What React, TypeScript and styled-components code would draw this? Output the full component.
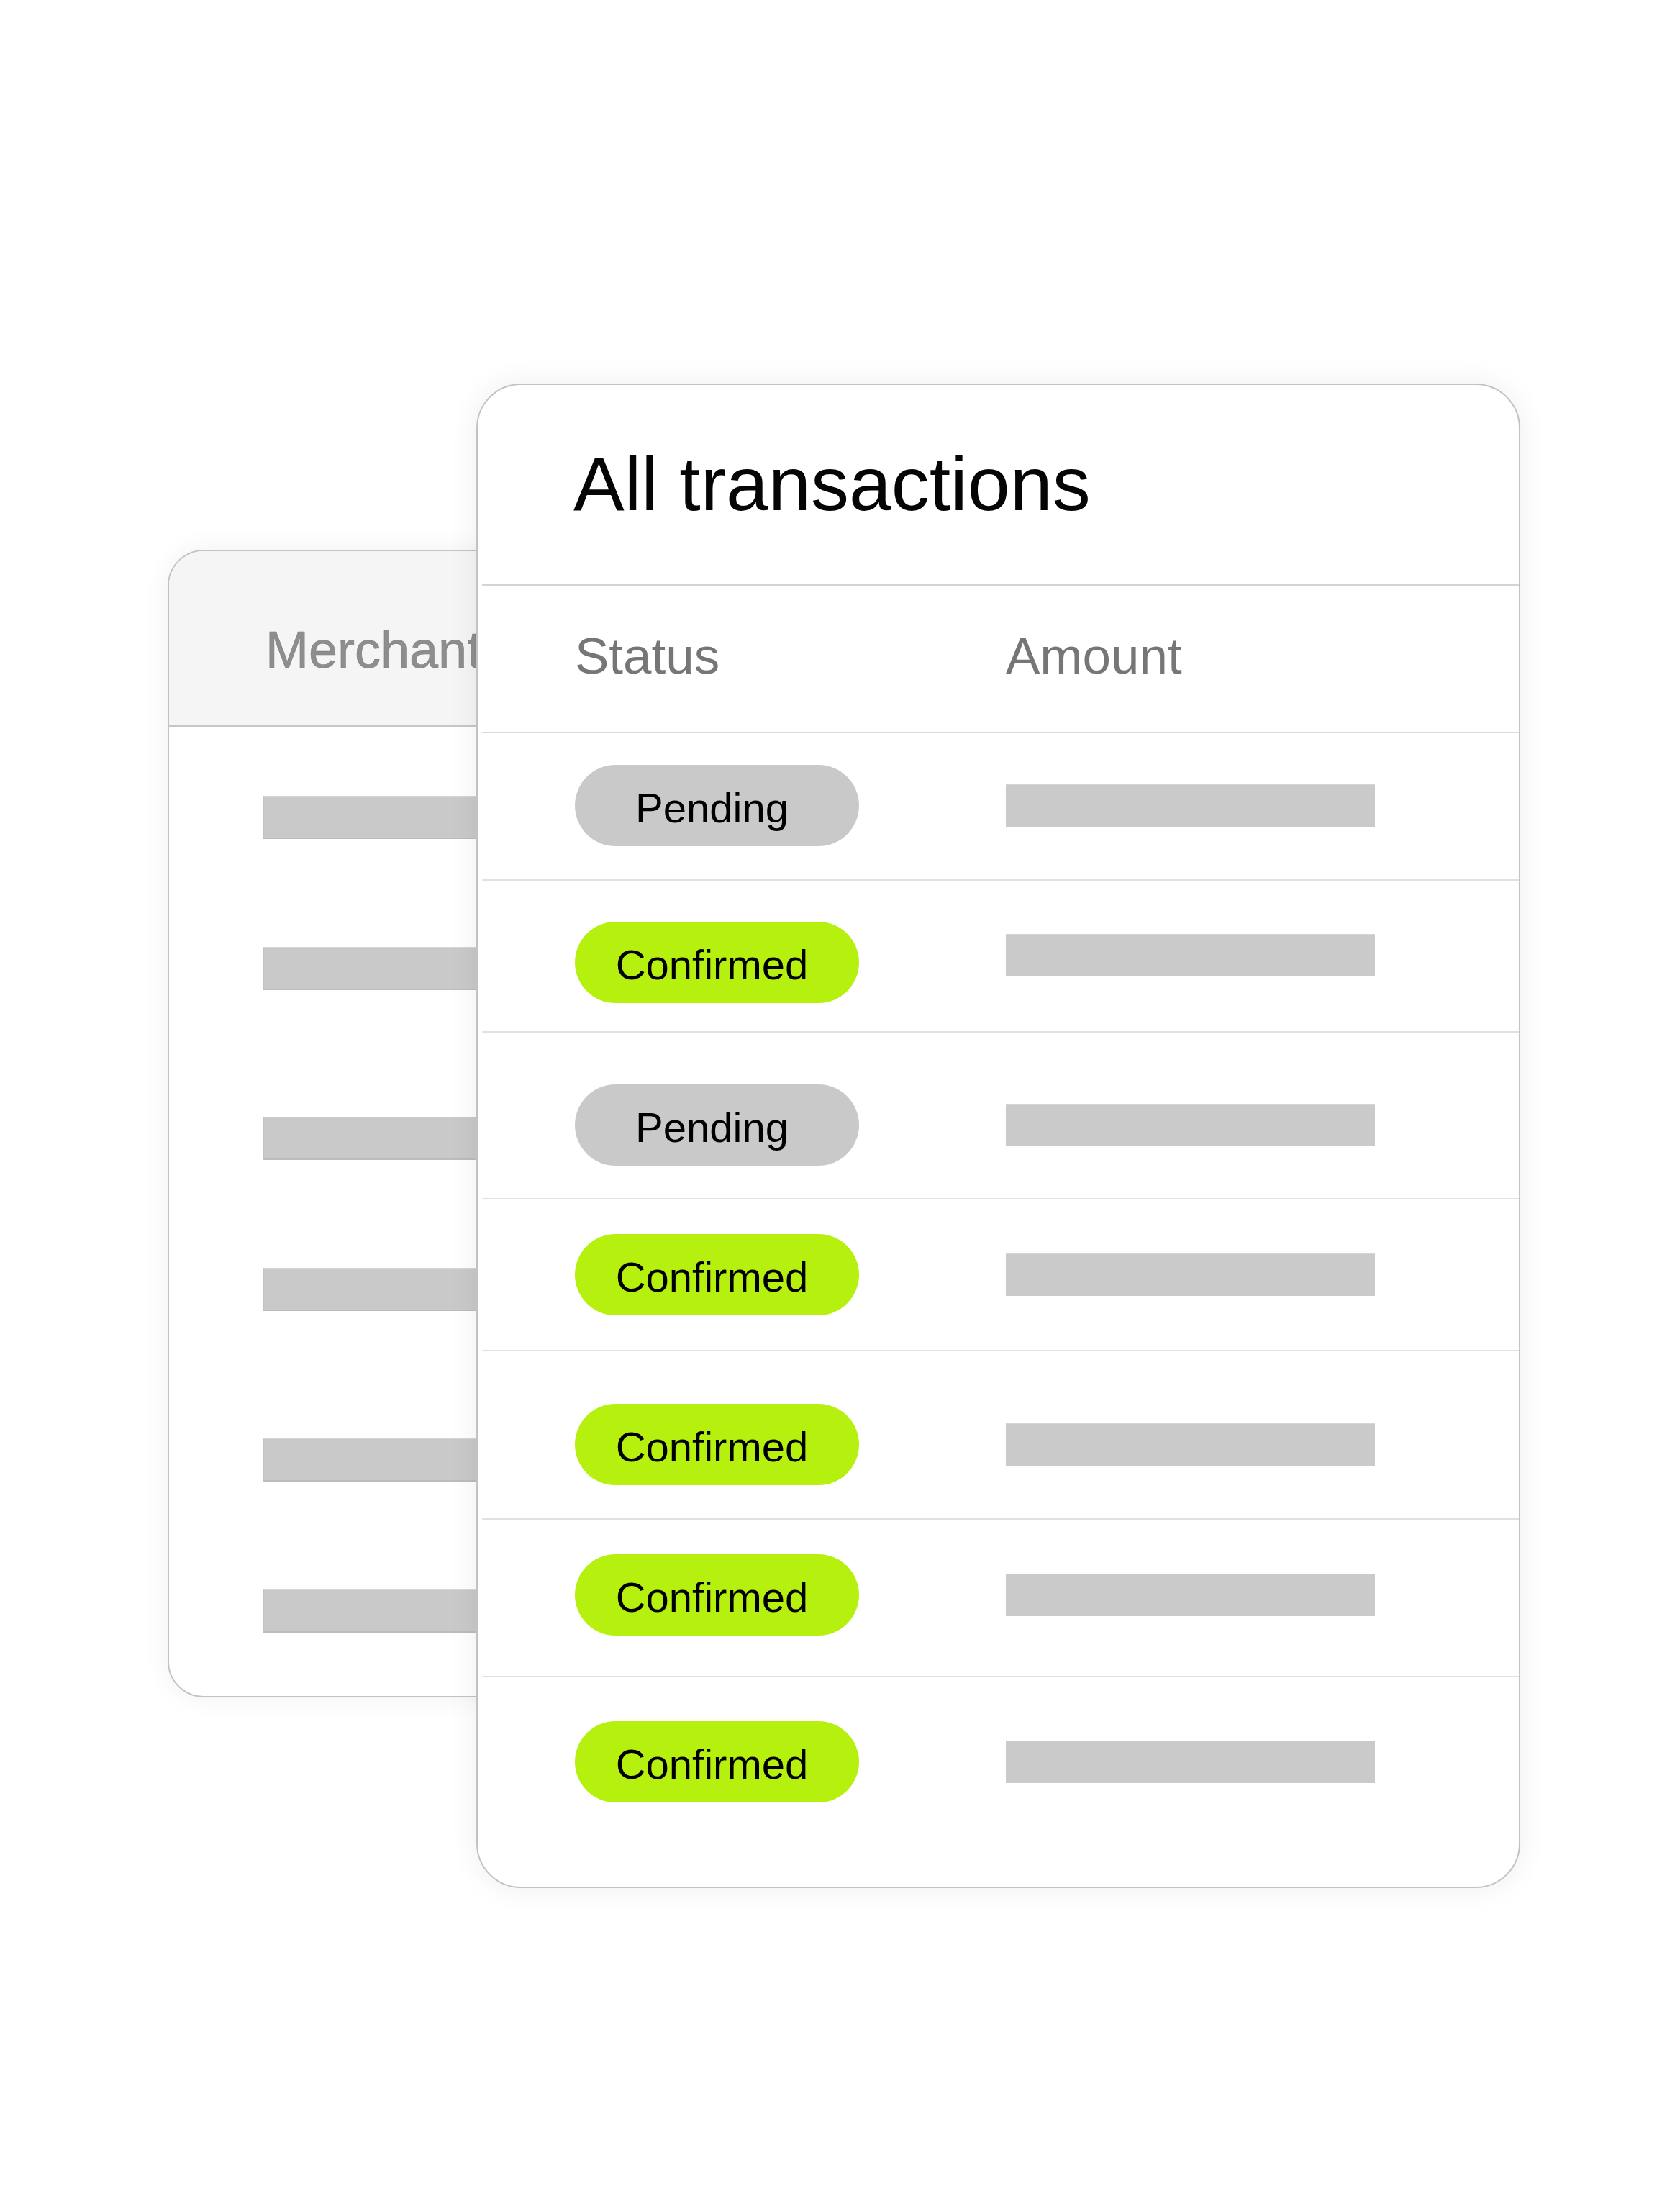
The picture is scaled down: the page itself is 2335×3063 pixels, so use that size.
import React from "react";
import styled, { createGlobalStyle } from "styled-components";

const GlobalStyle = createGlobalStyle`
  html, body {
    margin: 0;
    padding: 0;
    background: #ffffff;
  }
  body {
    font-family: "Liberation Sans", Arial, Helvetica, sans-serif;
    -webkit-font-smoothing: antialiased;
  }
  *, *::before, *::after {
    box-sizing: border-box;
  }
`;

const Stage = styled.main`
  position: relative;
  width: 2335px;
  height: 3063px;
  padding: 764px 0 0 233px;
  background: #ffffff;
  overflow: hidden;
`;

/* ---------- back card ---------- */

const BackCard = styled.section`
  width: 900px;
  height: 1595px;
  border: 2px solid #c3c3c3;
  border-radius: 50px;
  background: #ffffff;
  box-shadow: 0 0 38px rgba(0, 0, 0, 0.06);
  overflow: hidden;
  display: flex;
  flex-direction: column;
`;

const BackHeader = styled.div`
  height: 244px;
  padding: 101px 0 0 134px;
  background: #f5f5f5;
  border-bottom: 2px solid #c6c6c6;
  font-size: 72px;
  line-height: 1;
  color: #8e8e8e;
  -webkit-text-stroke: 0.6px #7c7c7c;
  white-space: nowrap;
`;

const BackList = styled.div`
  display: flex;
  flex-direction: column;
  padding-left: 130px;
`;

const BackBar = styled.div<{ $gap: number }>`
  width: 520px;
  height: 60px;
  margin-top: ${(p) => p.$gap}px;
  background: #c9c9c9;
  border-top: 1px solid #d6d6d6;
  border-bottom: 2px solid #bcbcbc;
  border-left: 2px solid #c2c2c2;
`;

/* ---------- front card ---------- */

const FrontCard = styled.section`
  position: absolute;
  left: 662px;
  top: 533px;
  width: 1451px;
  height: 2091px;
  padding-left: 6px;
  border: 2px solid #c2c2c2;
  border-radius: 62px;
  background: #ffffff;
  box-shadow: 0 0 42px rgba(0, 0, 0, 0.07);
  overflow: hidden;
  display: flex;
  flex-direction: column;
`;

const TitleArea = styled.header`
  height: 279px;
  padding: 84px 0 0 127px;
  border-bottom: 2px solid #d4d4d4;
`;

const Title = styled.h1`
  margin: 0;
  font-size: 106px;
  font-weight: 400;
  line-height: 1;
  color: #050505;
  white-space: nowrap;
`;

const HeaderRow = styled.div`
  display: grid;
  grid-template-columns: 599px 1fr;
  height: 205px;
  padding: 62px 0 0 129px;
  border-bottom: 2px solid #dadada;
`;

const HeaderCell = styled.span`
  font-size: 71px;
  line-height: 1;
  color: #767676;
`;

const Row = styled.div<{ $h: number; $pt: number; $last?: boolean }>`
  display: grid;
  grid-template-columns: 599px 1fr;
  align-items: center;
  align-content: start;
  height: ${(p) => p.$h}px;
  padding: ${(p) => p.$pt}px 0 0 129px;
  border-bottom: ${(p) => (p.$last ? "none" : "2px solid #e1e1e1")};
`;

const Badge = styled.span<{ $tone: "pending" | "confirmed" }>`
  display: block;
  width: 395px;
  height: 113px;
  padding: 6px 14px 0 0;
  border-radius: 57px;
  background: ${(p) => (p.$tone === "confirmed" ? "#b6f00f" : "#c9c9c9")};
  color: #000000;
  font-size: 58px;
  line-height: 107px;
  text-align: center;
  white-space: nowrap;
`;

const AmountBar = styled.div<{ $lift: number }>`
  width: 513px;
  height: 59px;
  margin-bottom: ${(p) => p.$lift * 2}px;
  background: #cacaca;
  border-top: 1px solid #d5d5d5;
`;

type Status = "Pending" | "Confirmed";

const rows: { status: Status; h: number; pt: number; lift?: number }[] = [
  { status: "Pending", h: 205, pt: 44 },
  { status: "Confirmed", h: 211, pt: 57, lift: 10 },
  { status: "Pending", h: 232, pt: 72 },
  { status: "Confirmed", h: 211, pt: 48 },
  { status: "Confirmed", h: 234, pt: 73 },
  { status: "Confirmed", h: 219, pt: 48 },
  { status: "Confirmed", h: 291, pt: 61 },
];

const backGaps = [96, 150, 176, 150, 177, 150];

export default function App() {
  return (
    <>
      <GlobalStyle />
      <Stage>
        <BackCard>
          <BackHeader>Merchant</BackHeader>
          <BackList>
            {backGaps.map((g, i) => (
              <BackBar key={i} $gap={g} />
            ))}
          </BackList>
        </BackCard>

        <FrontCard>
          <TitleArea>
            <Title>All transactions</Title>
          </TitleArea>
          <HeaderRow>
            <HeaderCell>Status</HeaderCell>
            <HeaderCell>Amount</HeaderCell>
          </HeaderRow>
          {rows.map((r, i) => (
            <Row key={i} $h={r.h} $pt={r.pt} $last={i === rows.length - 1}>
              <Badge $tone={r.status === "Confirmed" ? "confirmed" : "pending"}>
                {r.status}
              </Badge>
              <AmountBar $lift={r.lift ?? 0} />
            </Row>
          ))}
        </FrontCard>
      </Stage>
    </>
  );
}
